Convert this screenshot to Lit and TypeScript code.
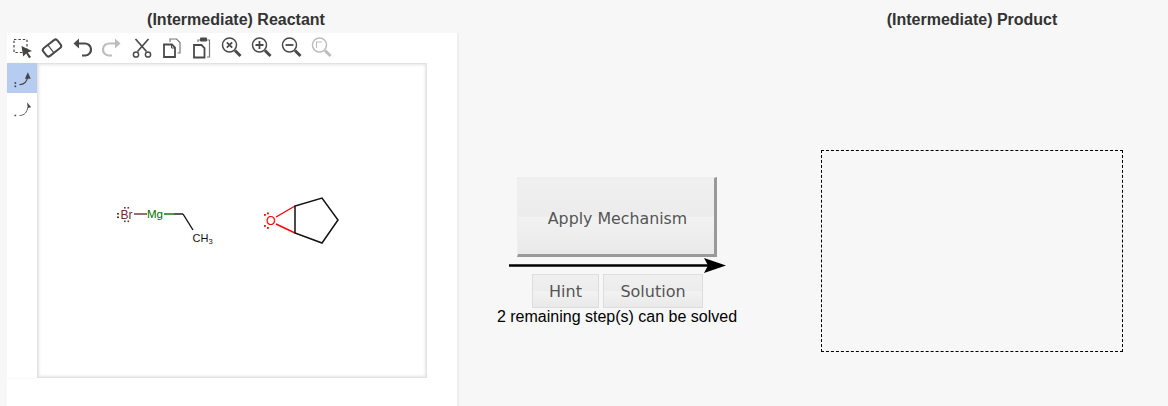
import { LitElement, html, css, svg } from 'lit';
import { customElement } from 'lit/decorators.js';

const INK = '#4a4a4a';
const MUTED = '#bdbdbd';

// toolbar icons, all on a 24x24 box
const lens = (inner: unknown, color = INK) => svg`
  <circle cx="9.5" cy="9" r="7" fill="#fff" stroke=${color} stroke-width="1.5"/>
  <path d="M15 14.5l5.5 5.5" stroke=${color} stroke-width="3"/>
  ${inner}`;

const topIcons = [
  svg`<rect x="4" y="3.5" width="13" height="13" fill="none" stroke="#444" stroke-width="1.2" stroke-dasharray="2.4 2"/>
      <path d="M11.5 10l10.5 5-4.2 1.4 3.2 4.6-2 1.2-2.8-4.6-3 3z" fill="#444"/>`,
  svg`<g transform="rotate(-38 12 12)"><rect x="3" y="7" width="18" height="10" rx="2.6" fill="none" stroke=${INK} stroke-width="2"/>
      <path d="M10.5 7v10" stroke=${INK} stroke-width="1.2"/></g>`,
  svg`<path d="M6 7.5h8.5a6 6 0 0 1 1 12H12" fill="none" stroke=${INK} stroke-width="2.2"/>
      <path d="M9 2.5L3.5 7.5 9 12.5z" fill=${INK}/>`,
  svg`<path d="M18 7.5H9.5a6 6 0 0 0-1 12H12" fill="none" stroke=${MUTED} stroke-width="2.2"/>
      <path d="M15 2.5l5.5 5L15 12.5z" fill=${MUTED}/>`,
  svg`<path d="M5.5 3l11 12.5M18.5 3l-11 12.5" stroke=${INK} stroke-width="1.7"/>
      <circle cx="6" cy="18.5" r="2.6" fill="none" stroke=${INK} stroke-width="1.5"/>
      <circle cx="18" cy="18.5" r="2.6" fill="none" stroke=${INK} stroke-width="1.5"/>`,
  svg`<path d="M10 6V3h6.5l3.5 3.5V17h-2.5" fill="none" stroke="#777" stroke-width="1.2"/>
      <path d="M4 8.5h8l3 3V21H4z" fill="#fff" stroke=${INK} stroke-width="1.8"/>
      <path d="M11.5 8.5v3.5H15" fill="none" stroke=${INK} stroke-width="1"/>`,
  svg`<path d="M8 6V4h11.5v17H17" fill="none" stroke="#777" stroke-width="1.2"/>
      <rect x="10" y="1.5" width="7" height="4" rx="1" fill=${INK}/>
      <path d="M4 9h7.5l3 3v9.5H4z" fill="#fff" stroke=${INK} stroke-width="1.8"/>`,
  lens(svg`<path d="M6.8 6.3l5.4 5.4M12.2 6.3l-5.4 5.4" stroke=${INK} stroke-width="1.8"/>`),
  lens(svg`<path d="M5.5 9h8M9.5 5v8" stroke=${INK} stroke-width="1.8"/>`),
  lens(svg`<path d="M5.5 9h8" stroke=${INK} stroke-width="1.8"/>`),
  lens(svg`<path d="M6.5 12V6h5.5" fill="none" stroke=${MUTED} stroke-width="1.1"/>`, MUTED),
];

const pairArrow = svg`
  <path d="M9 20c6 0 9-4 10-10" fill="none" stroke="#444" stroke-width="1.4"/>
  <path d="M19 5l3.5 8h-7z" fill="#444"/>
  <rect x="3" y="17" width="2" height="2" fill="#444"/>
  <rect x="3" y="21" width="2" height="2" fill="#444"/>`;

const singleArrow = svg`
  <path d="M9 21c6 0 9-4 10-10" fill="none" stroke="#555" stroke-width="1.1"/>
  <path d="M19 12l-1-7 5 6z" fill="#444"/>
  <rect x="3" y="20" width="2" height="2" fill="#555"/>`;

@customElement('app-root')
export class AppRoot extends LitElement {
  static styles = css`
    :host {
      display: block;
      width: 1168px;
      height: 406px;
      background: #f7f7f7;
      font-family: 'Liberation Sans', Arial, sans-serif;
      overflow: hidden;
    }
    .page {
      display: grid;
      grid-template-columns: 458px 318px 392px;
      height: 406px;
    }
    .title {
      height: 33px;
      line-height: 39px;
      text-align: center;
      font-size: 16px;
      font-weight: bold;
      color: #333;
    }
    .left .title {
      padding-left: 14px;
    }
    .sketcher {
      box-sizing: border-box;
      margin: 0 -1px 0 7px;
      height: 373px;
      background: #fff;
      border-right: 2px solid #eee;
      display: grid;
      grid-template-columns: 30px 390px;
      grid-template-rows: 30px 315px;
    }
    .toolbar {
      grid-column: 1 / 3;
      display: flex;
      gap: 6px;
      padding: 3px 0 0 3px;
    }
    .toolbar svg {
      width: 24px;
      height: 24px;
      display: block;
    }
    .side {
      box-shadow: 1px 0 2px #eee;
    }
    .side-tool {
      width: 30px;
      height: 30px;
      display: flex;
      align-items: center;
      justify-content: center;
    }
    .side-tool.active {
      background: #b6cdf1;
    }
    .side-tool svg {
      width: 20px;
      height: 20px;
    }
    .canvas {
      box-sizing: border-box;
      border: 1px solid #e2e2e2;
      box-shadow: inset 0 0 3px 1px #e6e6e6;
    }
    .canvas svg {
      display: block;
      width: 388px;
      height: 313px;
    }
    .middle {
      display: flex;
      flex-direction: column;
      align-items: center;
      padding-top: 177px;
    }
    .btn {
      box-sizing: border-box;
      font-family: 'DejaVu Sans', Verdana, sans-serif;
      color: #555;
      background: linear-gradient(#f0f0f0 0, #ececec 50%, #f2f2f2 52%, #e9e9e9 100%);
      display: flex;
      align-items: center;
      justify-content: center;
    }
    .apply {
      width: 200px;
      height: 80px;
      font-size: 15.8px;
      padding: 4px 0 0 3px;
      border-right: 3px solid #999;
      border-bottom: 3px solid #999;
      border-top: 1px solid #eee;
      border-left: 1px solid #eee;
    }
    .arrow {
      display: block;
      width: 218px;
      height: 17px;
      margin-left: 2px;
    }
    .actions {
      display: flex;
      gap: 4px;
      height: 34px;
    }
    .small {
      height: 34px;
      font-size: 16px;
      padding-left: 1px;
      border: 1px solid #ddd;
    }
    .hint {
      width: 67px;
    }
    .solution {
      width: 100px;
    }
    .status {
      font-size: 16px;
      line-height: 18px;
      color: #000;
      white-space: nowrap;
    }
    .right {
      display: flex;
      flex-direction: column;
      align-items: center;
    }
    .drop {
      box-sizing: border-box;
      width: 302px;
      height: 202px;
      margin-top: 117px;
      border: 1px dashed #000;
    }
  `;

  render() {
    return html`
      <div class="page">
        <section class="left">
          <div class="title">(Intermediate) Reactant</div>
          <div class="sketcher">
            <div class="toolbar">
              ${topIcons.map((i) => html`<svg viewBox="0 0 24 24">${i}</svg>`)}
            </div>
            <div class="side">
              <div class="side-tool active"><svg viewBox="0 0 24 24">${pairArrow}</svg></div>
              <div class="side-tool"><svg viewBox="0 0 24 24">${singleArrow}</svg></div>
            </div>
            <div class="canvas">${this.molecule()}</div>
          </div>
        </section>
        <section class="middle">
          <div class="btn apply">Apply Mechanism</div>
          <svg class="arrow" viewBox="0 0 218 17">
            <path d="M0 8.5h200" stroke="#000" stroke-width="2.4"/>
            <path d="M195 1l22 7.5-22 7.5 4-7.5z" fill="#000"/>
          </svg>
          <div class="actions">
            <div class="btn small hint">Hint</div>
            <div class="btn small solution">Solution</div>
          </div>
          <div class="status">2 remaining step(s) can be solved</div>
        </section>
        <section class="right">
          <div class="title">(Intermediate) Product</div>
          <div class="drop"></div>
        </section>
      </div>
    `;
  }

  // viewBox is in page coordinates so the atoms read like the reference
  private molecule() {
    return html`
      <svg viewBox="38 64 388 313" font-family="Liberation Sans, Arial, sans-serif" font-size="12">
        <path d="M134 214h13" stroke="#6b2f2f" stroke-width="1.4"/>
        <path d="M164 214h10" stroke="#006e00" stroke-width="1.4"/>
        <path d="M174 214h9" stroke="#111" stroke-width="1.4"/>
        <path d="M183 214l10 16" stroke="#111" stroke-width="1.4"/>
        <text x="120.5" y="219" fill="#6b2f2f">Br</text>
        <text x="147" y="218" fill="#006e00" font-size="11.5">Mg</text>
        <text x="192.5" y="242" fill="#111" font-size="11">CH<tspan font-size="7.5" dy="2">3</tspan></text>
        <g fill="#6b2f2f">
          <rect x="117" y="213" width="2" height="1.6"/><rect x="117" y="216.5" width="2" height="1.6"/>
          <rect x="124" y="207" width="1.6" height="1.6"/><rect x="127.5" y="207" width="1.6" height="1.6"/>
          <rect x="124" y="220.5" width="1.6" height="1.6"/><rect x="127.5" y="220.5" width="1.6" height="1.6"/>
        </g>
        <path d="M276 217l19-11M276 224l19 9" stroke="#f00" stroke-width="1.4"/>
        <path d="M295 206v27l27 10 16-23-16-22z" fill="none" stroke="#111" stroke-width="1.5"/>
        <text x="266" y="224.5" fill="#f00" font-size="12.5">O</text>
        <g fill="#f00">
          <rect x="264" y="214" width="1.8" height="1.8"/><rect x="267" y="212.5" width="1.8" height="1.8"/>
          <rect x="264" y="225" width="1.8" height="1.8"/><rect x="267" y="227" width="1.8" height="1.8"/>
        </g>
      </svg>
    `;
  }
}
